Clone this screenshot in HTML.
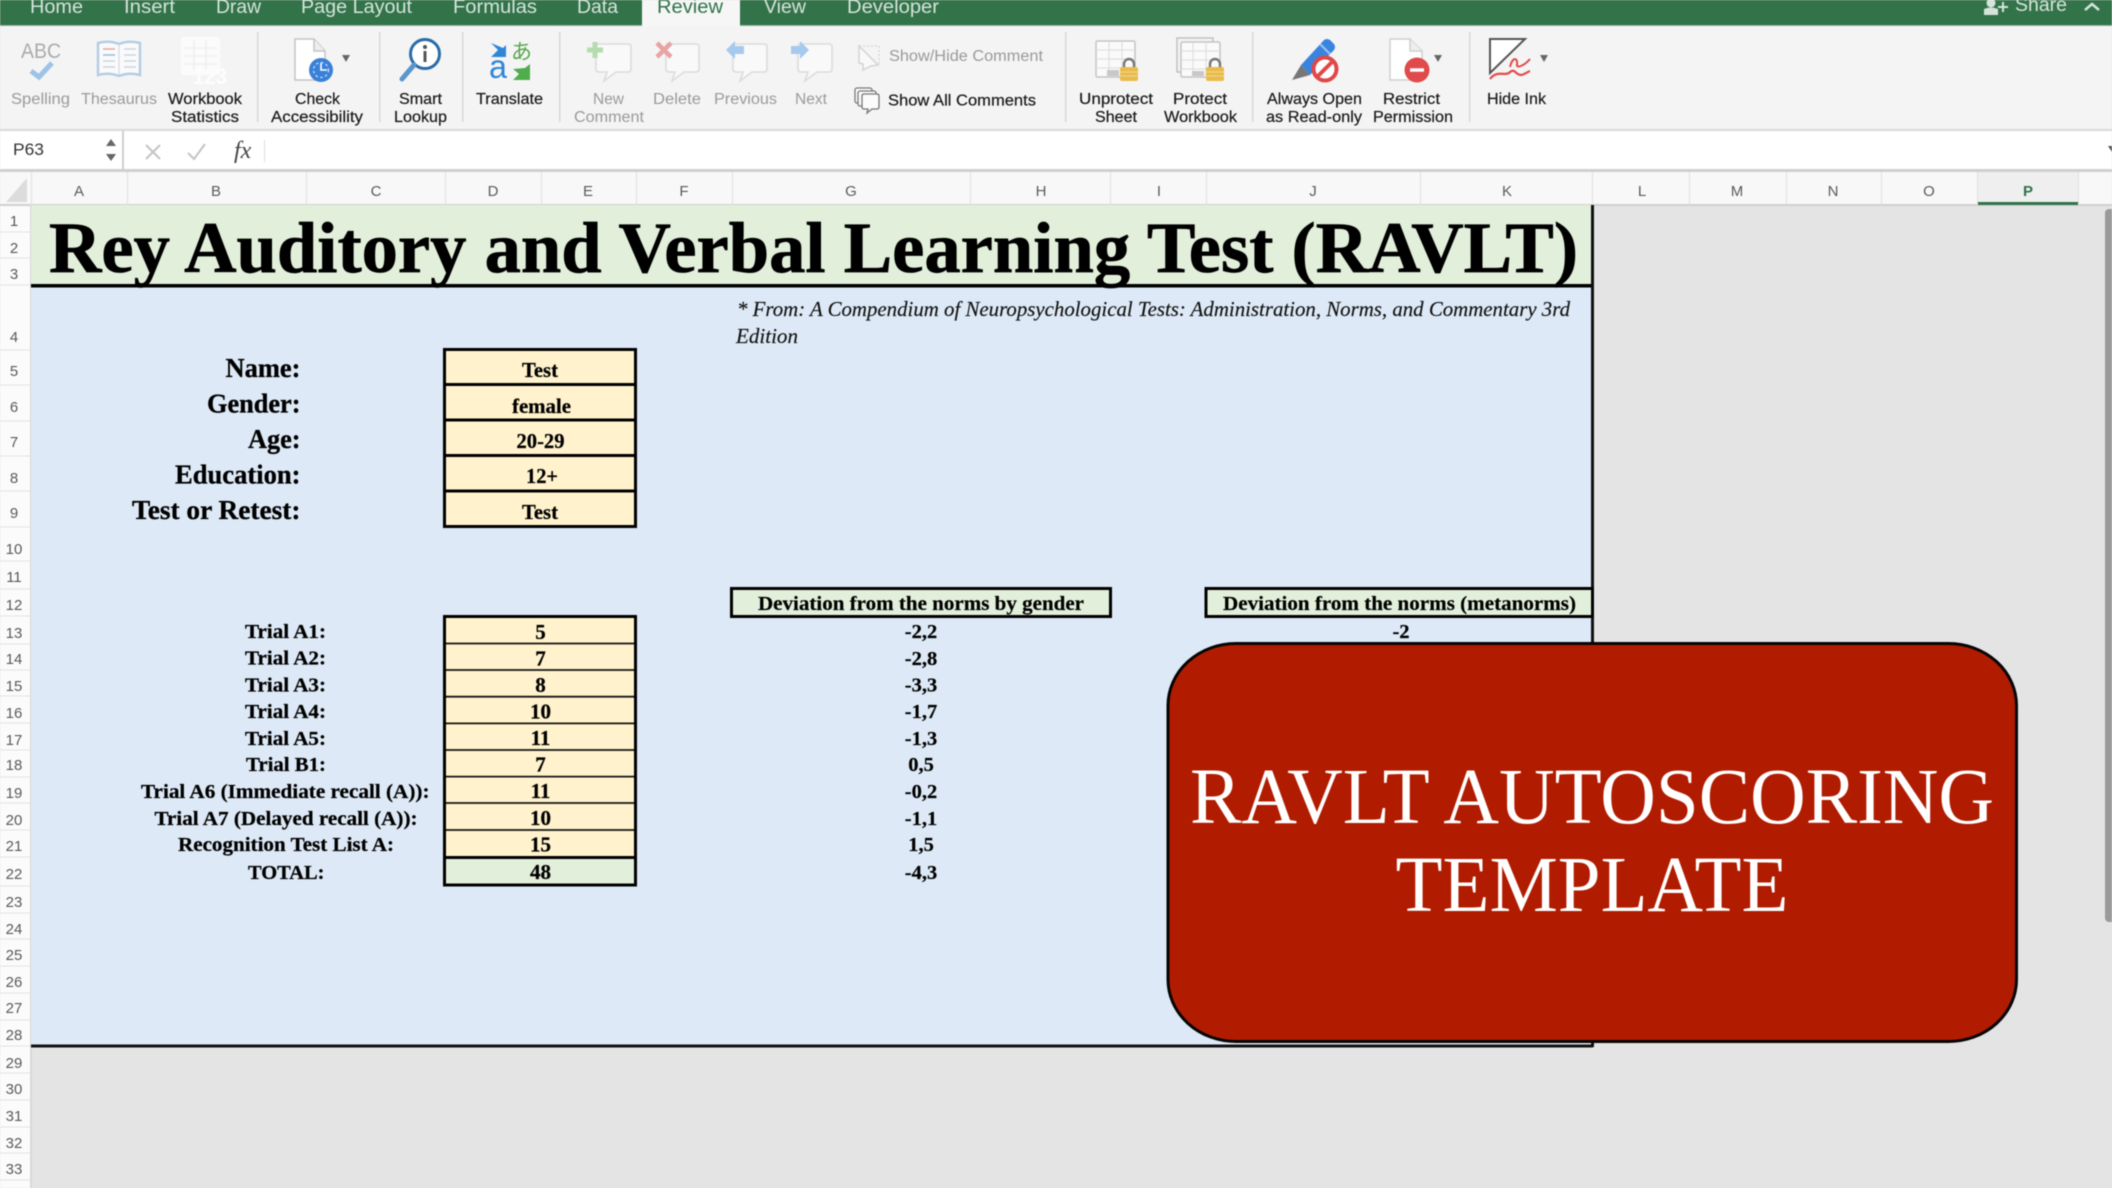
<!DOCTYPE html>
<html><head><meta charset="utf-8"><title>RAVLT Autoscoring Template</title>
<style>
html,body{margin:0;padding:0;background:#e5e4e5;width:2112px;height:1188px;overflow:hidden}
svg{display:block;filter:blur(.45px)}
.r{font-family:"Liberation Sans",sans-serif;font-size:15.5px;fill:#1a1a1a;stroke:#1a1a1a;stroke-width:.2px}
.d{font-family:"Liberation Sans",sans-serif;font-size:15.5px;fill:#9a9a9a}
.t{font-family:"Liberation Sans",sans-serif;font-size:19px;fill:#d5e4da}
.h{font-family:"Liberation Sans",sans-serif;font-size:15px;fill:#5a5a5a;text-anchor:middle}
.b{font-family:"Liberation Serif",serif;font-weight:bold;fill:#000}
</style></head><body>
<svg width="2112" height="1188" viewBox="0 0 2112 1188" xmlns="http://www.w3.org/2000/svg">
<rect width="2112" height="1188" fill="#e5e4e5"/>
<!-- title bar -->
<rect width="2112" height="25" fill="#33734a"/>
<rect y="25" width="2112" height="104" fill="#f4f4f4"/>
<rect x="642" width="98" height="26" fill="#f6f6f6"/>
<rect y="25" width="642" height="1" fill="#8fb39b"/><rect x="740" y="25" width="1372" height="1" fill="#8fb39b"/>
<text class="t" x="30" y="13" textLength="53" lengthAdjust="spacingAndGlyphs">Home</text>
<text class="t" x="124" y="13" textLength="51" lengthAdjust="spacingAndGlyphs">Insert</text>
<text class="t" x="216" y="13" textLength="45" lengthAdjust="spacingAndGlyphs">Draw</text>
<text class="t" x="301" y="13" textLength="111" lengthAdjust="spacingAndGlyphs">Page Layout</text>
<text class="t" x="453" y="13" textLength="84" lengthAdjust="spacingAndGlyphs">Formulas</text>
<text class="t" x="577" y="13" textLength="41" lengthAdjust="spacingAndGlyphs">Data</text>
<text class="t" x="657" y="13" textLength="66" lengthAdjust="spacingAndGlyphs" style="fill:#2f7349">Review</text>
<text class="t" x="764" y="13" textLength="42" lengthAdjust="spacingAndGlyphs">View</text>
<text class="t" x="847" y="13" textLength="92" lengthAdjust="spacingAndGlyphs">Developer</text>
<text class="t" x="2015" y="11" textLength="52" lengthAdjust="spacingAndGlyphs">Share</text>
<circle cx="1991" cy="3" r="4.5" fill="#d5e4da"/><path d="M1984 15v-6q7-3 14 0v6z" fill="#d5e4da"/>
<path d="M1998 7h10M2003 2v10" stroke="#d5e4da" stroke-width="2"/>
<path d="M2085 10l7-6 7 6" fill="none" stroke="#d5e4da" stroke-width="2.5"/>

<!-- ribbon separators -->
<g fill="#d8d8d8"><rect x="257" y="32" width="1.5" height="90"/><rect x="379" y="32" width="1.5" height="90"/><rect x="462" y="32" width="1.5" height="90"/><rect x="559" y="32" width="1.5" height="90"/><rect x="1065" y="32" width="1.5" height="90"/><rect x="1252" y="32" width="1.5" height="90"/><rect x="1469" y="32" width="1.5" height="90"/></g>

<!-- ribbon labels -->
<text class="d" x="11" y="104" textLength="59" lengthAdjust="spacingAndGlyphs">Spelling</text>
<text class="d" x="81" y="104" textLength="76" lengthAdjust="spacingAndGlyphs">Thesaurus</text>
<text class="r" x="168" y="104" textLength="74" lengthAdjust="spacingAndGlyphs">Workbook</text>
<text class="r" x="171" y="122" textLength="68" lengthAdjust="spacingAndGlyphs">Statistics</text>
<text class="r" x="295" y="104" textLength="45" lengthAdjust="spacingAndGlyphs">Check</text>
<text class="r" x="271" y="122" textLength="92" lengthAdjust="spacingAndGlyphs">Accessibility</text>
<text class="r" x="399" y="104" textLength="43" lengthAdjust="spacingAndGlyphs">Smart</text>
<text class="r" x="394" y="122" textLength="53" lengthAdjust="spacingAndGlyphs">Lookup</text>
<text class="r" x="476" y="104" textLength="67" lengthAdjust="spacingAndGlyphs">Translate</text>
<text class="d" x="593" y="104" textLength="31" lengthAdjust="spacingAndGlyphs">New</text>
<text class="d" x="574" y="122" textLength="70" lengthAdjust="spacingAndGlyphs">Comment</text>
<text class="d" x="653" y="104" textLength="48" lengthAdjust="spacingAndGlyphs">Delete</text>
<text class="d" x="714" y="104" textLength="63" lengthAdjust="spacingAndGlyphs">Previous</text>
<text class="d" x="795" y="104" textLength="32" lengthAdjust="spacingAndGlyphs">Next</text>
<text class="d" x="889" y="61" textLength="154" lengthAdjust="spacingAndGlyphs">Show/Hide Comment</text>
<text class="r" x="888" y="105.5" textLength="148" lengthAdjust="spacingAndGlyphs">Show All Comments</text>
<text class="r" x="1079" y="104" textLength="74" lengthAdjust="spacingAndGlyphs">Unprotect</text>
<text class="r" x="1095" y="122" textLength="42" lengthAdjust="spacingAndGlyphs">Sheet</text>
<text class="r" x="1173" y="104" textLength="54" lengthAdjust="spacingAndGlyphs">Protect</text>
<text class="r" x="1164" y="122" textLength="73" lengthAdjust="spacingAndGlyphs">Workbook</text>
<text class="r" x="1267" y="104" textLength="95" lengthAdjust="spacingAndGlyphs">Always Open</text>
<text class="r" x="1266" y="122" textLength="96" lengthAdjust="spacingAndGlyphs">as Read-only</text>
<text class="r" x="1383" y="104" textLength="57" lengthAdjust="spacingAndGlyphs">Restrict</text>
<text class="r" x="1373" y="122" textLength="80" lengthAdjust="spacingAndGlyphs">Permission</text>
<text class="r" x="1487" y="104" textLength="59" lengthAdjust="spacingAndGlyphs">Hide Ink</text>

<!-- icons: spelling -->
<text x="21" y="58" font-family="Liberation Sans,sans-serif" font-size="21" fill="#ababab" textLength="40" lengthAdjust="spacingAndGlyphs">ABC</text>
<path d="M31 71l8 6 13-14" fill="none" stroke="#9dc3e6" stroke-width="5"/>
<!-- thesaurus -->
<path d="M98 43q11-3 21 1 10-4 21-1v32q-11-3-21 1-10-4-21-1z" fill="#fafafa" stroke="#b4cde4" stroke-width="2.5"/>
<path d="M119 44v31" stroke="#c8d8e8"/>
<path d="M103 49h12M103 55h12M103 61h12M103 67h12M124 49h12M124 55h12M124 61h12M124 67h12" stroke="#cdd5e0" stroke-width="1.5"/>
<path d="M103 49h12" stroke="#e8b0a8" stroke-width="1.5"/><path d="M103 55h12" stroke="#9dc3e6" stroke-width="1.5"/>
<!-- stats -->
<rect x="181" y="37" width="39" height="38" rx="3" fill="#fbfbfb"/>
<path d="M184 48h33M184 56h33M184 64h33M194 40v30M206 40v30" stroke="#efefef" stroke-width="1.5"/>
<text x="193" y="84" font-family="Liberation Sans,sans-serif" font-size="22" font-weight="bold" fill="#fdfdfd" textLength="34" lengthAdjust="spacingAndGlyphs">123</text>
<!-- check accessibility -->
<path d="M295 39h19l11 12v29h-30z" fill="#fff" stroke="#c4c4c4" stroke-width="1.5"/><path d="M314 39v12h11" fill="#eee" stroke="#c4c4c4" stroke-width="1.5"/>
<circle cx="321" cy="70" r="12" fill="#3a80d8"/><path d="M321 63v7h6" fill="none" stroke="#fff" stroke-width="1.6"/><circle cx="321" cy="70" r="7.5" fill="none" stroke="#cfe2f8" stroke-dasharray="2.5 2.5" stroke-width="1.2"/>
<path d="M342 55h8l-4 7z" fill="#666"/>
<!-- smart lookup -->
<circle cx="425" cy="54" r="14.5" fill="#fff" stroke="#2a6ca8" stroke-width="3"/>
<path d="M414 65l-12 14" stroke="#5a96cc" stroke-width="5" stroke-linecap="round"/>
<circle cx="425" cy="47" r="2" fill="#555"/><path d="M425 51v11" stroke="#555" stroke-width="3"/>
<!-- translate -->
<path d="M491 43l12 5 3-3v12h-15l7-7z" fill="#2f86d9"/>
<text x="511" y="59" font-family="Noto Sans CJK JP,sans-serif" font-size="21" fill="#55a64c">あ</text>
<text x="489" y="78" font-family="Liberation Sans,sans-serif" font-size="33" fill="#2f86d9" textLength="18" lengthAdjust="spacingAndGlyphs">a</text>
<path d="M530 64v16h-17l6-6-6-5 12-1z" fill="#50ad4c"/>
<!-- comment bubbles -->
<g fill="#f9f9f9" stroke="#dcdcdc" stroke-width="1.6">
<path d="M596 44h32q3 0 3 3v22q0 3-3 3h-12l-12 9 3-9h-8q-3 0-3-3v-22q0-3 3-3z"/>
<path d="M666 44h30q3 0 3 3v22q0 3-3 3h-12l-12 9 3-9h-6q-3 0-3-3v-22q0-3 3-3z"/>
<path d="M733 44h31q3 0 3 3v22q0 3-3 3h-12l-12 9 3-9h-7q-3 0-3-3v-22q0-3 3-3z"/>
<path d="M798 44h31q3 0 3 3v22q0 3-3 3h-12l-12 9 3-9h-7q-3 0-3-3v-22q0-3 3-3z"/>
</g>
<path d="M587 50h16M595 42v16" stroke="#b5dcae" stroke-width="5"/>
<path d="M657 43l14 14M671 43l-14 14" stroke="#e8a3a3" stroke-width="4.5"/>
<path d="M726 50l9-9v5h9v8h-9v5z" fill="#a6c9ee"/>
<path d="M809 50l-9-9v5h-9v8h9v5z" fill="#a6c9ee"/>
<!--- show/hide -->
<path d="M859 46l19 19-7 1-8 4v-6l-4-1z" fill="#f9f9f9" stroke="#d4d4d4" stroke-width="1.5"/>
<path d="M859 46h20v18" fill="none" stroke="#d4d4d4" stroke-width="1.2" stroke-dasharray="2 2"/>
<g fill="#fbfbfb" stroke="#777" stroke-width="1.3">
<rect x="855" y="88" width="17" height="15" rx="2"/><rect x="858" y="91" width="18" height="15" rx="2"/>
<path d="M864 94h13q2 0 2 2v11q0 2-2 2h-5l-5 4 1-4h-4q-2 0-2-2v-11q0-2 2-2z"/>
</g>
<!-- unprotect -->
<rect x="1096" y="41" width="39" height="36" rx="1.5" fill="#fafafa" stroke="#c4c4c4" stroke-width="1.5"/>
<path d="M1096 50h39M1096 59h39M1096 68h39M1109 41v36M1122 41v36" stroke="#dcdcdc"/>
<rect x="1107" y="70" width="12" height="6" fill="#c8c8c8"/>
<path d="M1124 68v-4a5 5 0 0 1 10 0v4" fill="none" stroke="#777" stroke-width="2.4"/>
<rect x="1120" y="67" width="18" height="14" rx="2" fill="#e8bb4c"/><path d="M1120 72h18M1120 76h18" stroke="#f2d88a"/>
<!-- protect -->
<rect x="1177" y="38" width="36" height="34" fill="#f3f3f3" stroke="#bbb" stroke-width="1.3"/>
<rect x="1181" y="42" width="39" height="35" rx="1.5" fill="#fafafa" stroke="#c4c4c4" stroke-width="1.5"/>
<path d="M1181 51h39M1181 60h39M1181 69h39M1193 42v35M1206 42v35" stroke="#dcdcdc"/>
<rect x="1192" y="71" width="12" height="5" fill="#c8c8c8"/>
<path d="M1210 68v-4a5 5 0 0 1 10 0v4" fill="none" stroke="#777" stroke-width="2.4"/>
<rect x="1206" y="67" width="18" height="14" rx="2" fill="#e8bb4c"/><path d="M1206 72h18M1206 76h18" stroke="#f2d88a"/>
<!-- read only -->
<path d="M1301 65L1324 40q3-2 6 0l4 4q2 3 0 6L1310 75z" fill="#3a84e0"/>
<path d="M1320 44l10 10" stroke="#9cc4f0" stroke-width="2"/>
<path d="M1301 65l9 10-18 5z" fill="#777"/>
<circle cx="1325" cy="69" r="11.5" fill="#fff" stroke="#e04848" stroke-width="4"/><path d="M1318 76l14-14" stroke="#e04848" stroke-width="4"/>
<!-- restrict -->
<path d="M1390 39h20l12 12v29h-32z" fill="#fff" stroke="#cfcfcf" stroke-width="1.5"/><path d="M1410 39v12h12" fill="#eee" stroke="#cfcfcf" stroke-width="1.5"/>
<circle cx="1417" cy="70" r="12.5" fill="#e04a4a"/><path d="M1410 70h14" stroke="#fff" stroke-width="3.5"/>
<path d="M1434 55h8l-4 7z" fill="#666"/>
<!-- hide ink -->
<path d="M1490 73V39h35z" fill="#fff" stroke="#555" stroke-width="2"/>
<path d="M1510 67c3-12 8-8 7-3s7 2 13-5" fill="none" stroke="#e24a4a" stroke-width="2"/>
<path d="M1490 79c7-9 14-3 19-6 6-6 6 2 12 2 3 0 6-3 9-4" fill="none" stroke="#e24a4a" stroke-width="2.2"/>
<path d="M1540 55h8l-4 7z" fill="#666"/>

<!-- formula bar -->
<rect y="129" width="2112" height="2" fill="#d9d9d9"/>
<rect y="131" width="2112" height="39" fill="#fff"/>
<rect y="169" width="2112" height="3" fill="#cfcfcf"/>
<rect x="122" y="131" width="2" height="39" fill="#cfcfcf"/>
<text x="13" y="155" font-family="Liberation Sans,sans-serif" font-size="17" fill="#333" textLength="31" lengthAdjust="spacingAndGlyphs">P63</text>
<path d="M106 146l5-7 5 7zM106 154l5 7 5-7z" fill="#666"/>
<path d="M146 145l14 14M160 145l-14 14" stroke="#c4c4c4" stroke-width="2"/>
<path d="M188 153l6 6 11-15" fill="none" stroke="#c4c4c4" stroke-width="2"/>
<text x="234" y="158" font-family="Liberation Serif,serif" font-style="italic" font-size="24" fill="#444">fx</text>
<rect x="264" y="140" width="1" height="22" fill="#ddd"/>
<path d="M2108 146l4 6v-6z" fill="#555"/>

<!-- column header -->
<rect y="172" width="2112" height="33" fill="#f8f8f8"/>
<rect y="204" width="2112" height="2" fill="#d0d0d0"/>
<rect x="1977" y="172" width="101" height="33" fill="#efefef"/>
<rect x="1977" y="202" width="101" height="3" fill="#2f7349"/>
<path d="M6 202L27 178v24z" fill="#dcdcdc"/>
<g fill="#e0e0e0"><rect x="31" y="172" width="1" height="33"/><rect x="127" y="172" width="1" height="33"/><rect x="306" y="172" width="1" height="33"/><rect x="445" y="172" width="1" height="33"/><rect x="541" y="172" width="1" height="33"/><rect x="636" y="172" width="1" height="33"/><rect x="732" y="172" width="1" height="33"/><rect x="970" y="172" width="1" height="33"/><rect x="1110" y="172" width="1" height="33"/><rect x="1206" y="172" width="1" height="33"/><rect x="1420" y="172" width="1" height="33"/><rect x="1592" y="172" width="1" height="33"/><rect x="1689" y="172" width="1" height="33"/><rect x="1786" y="172" width="1" height="33"/><rect x="1881" y="172" width="1" height="33"/><rect x="1977" y="172" width="1" height="33"/><rect x="2078" y="172" width="1" height="33"/></g>
<text class="h" x="79" y="196">A</text><text class="h" x="216" y="196">B</text><text class="h" x="376" y="196">C</text><text class="h" x="493" y="196">D</text><text class="h" x="588" y="196">E</text><text class="h" x="684" y="196">F</text><text class="h" x="851" y="196">G</text><text class="h" x="1041" y="196">H</text><text class="h" x="1159" y="196">I</text><text class="h" x="1313" y="196">J</text><text class="h" x="1507" y="196">K</text><text class="h" x="1642" y="196">L</text><text class="h" x="1737" y="196">M</text><text class="h" x="1833" y="196">N</text><text class="h" x="1929" y="196">O</text><text class="h" x="2028" y="196" style="fill:#2f7349;font-weight:bold">P</text>

<!-- row header -->
<rect y="206" width="31" height="982" fill="#fbfbfb"/>
<rect x="30" y="205" width="2" height="983" fill="#d8d8d8"/>
<path d="M0 232h30M0 258h30M0 285h30M0 350h30M0 385h30M0 421h30M0 456h30M0 491h30M0 527h30M0 561h30M0 589h30M0 616h30M0 644h30M0 670h30M0 696h30M0 723h30M0 750h30M0 777h30M0 803h30M0 830h30M0 857h30M0 886h30M0 913h30M0 939h30M0 966h30M0 993h30M0 1020h30M0 1046h30M0 1073h30M0 1100h30M0 1127h30M0 1153h30M0 1180h30" stroke="#e4e4e4" stroke-width="1"/>
<text class="h" x="14" y="226">1</text><text class="h" x="14" y="253">2</text><text class="h" x="14" y="279">3</text><text class="h" x="14" y="342">4</text><text class="h" x="14" y="376">5</text><text class="h" x="14" y="412">6</text><text class="h" x="14" y="447">7</text><text class="h" x="14" y="483">8</text><text class="h" x="14" y="518">9</text><text class="h" x="14" y="554">10</text><text class="h" x="14" y="582">11</text><text class="h" x="14" y="610">12</text><text class="h" x="14" y="638">13</text><text class="h" x="14" y="664">14</text><text class="h" x="14" y="691">15</text><text class="h" x="14" y="718">16</text><text class="h" x="14" y="745">17</text><text class="h" x="14" y="770">18</text><text class="h" x="14" y="798">19</text><text class="h" x="14" y="825">20</text><text class="h" x="14" y="851">21</text><text class="h" x="14" y="879">22</text><text class="h" x="14" y="907">23</text><text class="h" x="14" y="934">24</text><text class="h" x="14" y="960">25</text><text class="h" x="14" y="987">26</text><text class="h" x="14" y="1013">27</text><text class="h" x="14" y="1040">28</text><text class="h" x="14" y="1068">29</text><text class="h" x="14" y="1094">30</text><text class="h" x="14" y="1121">31</text><text class="h" x="14" y="1148">32</text><text class="h" x="14" y="1174">33</text>

<!-- sheet -->
<rect x="31" y="205" width="1561" height="80" fill="#e2efda"/>
<rect x="31" y="285" width="1561" height="760" fill="#dde9f6"/>
<rect x="31" y="284" width="1562" height="3.5" fill="#000"/>
<rect x="31" y="1044.5" width="1562" height="3" fill="#111"/>
<rect x="1591" y="205" width="3" height="842" fill="#111"/>
<text class="b" x="49" y="272" font-size="72" stroke="#000" stroke-width=".7" textLength="1529" lengthAdjust="spacingAndGlyphs">Rey Auditory and Verbal Learning Test (RAVLT)</text>
<g font-family="Liberation Serif,serif" font-style="italic" font-size="21.5" fill="#111" stroke="#111" stroke-width=".15">
<text x="737" y="316" textLength="833" lengthAdjust="spacingAndGlyphs">* From: A Compendium of Neuropsychological Tests: Administration, Norms, and Commentary 3rd</text>
<text x="736" y="343" textLength="62" lengthAdjust="spacingAndGlyphs">Edition</text>
</g>

<!-- top labels -->
<g font-size="27" font-family="Liberation Serif,serif" font-weight="bold" fill="#000" stroke="#000" stroke-width=".3">
<text x="225.5" y="377" textLength="75" lengthAdjust="spacingAndGlyphs">Name:</text>
<text x="207" y="412.5" textLength="93.5" lengthAdjust="spacingAndGlyphs">Gender:</text>
<text x="248" y="448" textLength="52.5" lengthAdjust="spacingAndGlyphs">Age:</text>
<text x="175" y="483.5" textLength="125.5" lengthAdjust="spacingAndGlyphs">Education:</text>
<text x="132" y="519" textLength="168.5" lengthAdjust="spacingAndGlyphs">Test or Retest:</text>
</g>
<!-- top box -->
<rect x="444.5" y="349.5" width="191" height="177" fill="#fff2cc" stroke="#000" stroke-width="3"/>
<path d="M444 384.5h192M444 420h192M444 455.5h192M444 491h192" stroke="#000" stroke-width="3"/>
<g font-family="Liberation Serif,serif" font-weight="bold" font-size="21" fill="#000" stroke="#000" stroke-width=".25">
<text x="522" y="377" textLength="36" lengthAdjust="spacingAndGlyphs">Test</text>
<text x="512" y="413" textLength="59" lengthAdjust="spacingAndGlyphs">female</text>
<text x="516.5" y="448" textLength="48" lengthAdjust="spacingAndGlyphs">20-29</text>
<text x="526" y="483" textLength="32" lengthAdjust="spacingAndGlyphs">12+</text>
<text x="522" y="519" textLength="36" lengthAdjust="spacingAndGlyphs">Test</text>
</g>

<!-- trial labels -->
<g font-family="Liberation Serif,serif" font-weight="bold" font-size="20.5" fill="#000" stroke="#000" stroke-width=".25">
<text x="245" y="638" textLength="81" lengthAdjust="spacingAndGlyphs">Trial A1:</text>
<text x="245" y="664.5" textLength="81" lengthAdjust="spacingAndGlyphs">Trial A2:</text>
<text x="245" y="691.5" textLength="81" lengthAdjust="spacingAndGlyphs">Trial A3:</text>
<text x="245" y="718" textLength="81" lengthAdjust="spacingAndGlyphs">Trial A4:</text>
<text x="245" y="745" textLength="81" lengthAdjust="spacingAndGlyphs">Trial A5:</text>
<text x="246" y="771" textLength="80" lengthAdjust="spacingAndGlyphs">Trial B1:</text>
<text x="141" y="798" textLength="288.5" lengthAdjust="spacingAndGlyphs">Trial A6 (Immediate recall (A)):</text>
<text x="154.5" y="825" textLength="263" lengthAdjust="spacingAndGlyphs">Trial A7 (Delayed recall (A)):</text>
<text x="178" y="851" textLength="216" lengthAdjust="spacingAndGlyphs">Recognition Test List A:</text>
<text x="248" y="879" textLength="76.5" lengthAdjust="spacingAndGlyphs">TOTAL:</text>
</g>
<!-- lower box -->
<rect x="444.5" y="616.5" width="191" height="241" fill="#fff2cc"/>
<rect x="444.5" y="857" width="191" height="28" fill="#e2efda"/>
<path d="M444 643.5h192M444 670h192M444 696.7h192M444 723.4h192M444 750h192M444 776.6h192M444 803h192M444 830h192" stroke="#151515" stroke-width="1.8"/>
<path d="M444 857.5h192" stroke="#000" stroke-width="3"/>
<rect x="444.5" y="616.5" width="191" height="268.5" fill="none" stroke="#000" stroke-width="3"/>
<g font-family="Liberation Serif,serif" font-weight="bold" font-size="21" fill="#000" stroke="#000" stroke-width=".25" text-anchor="middle">
<text x="540.5" y="639">5</text><text x="540.5" y="665.5">7</text><text x="540.5" y="692">8</text><text x="540.5" y="718.5">10</text><text x="540.5" y="745">11</text><text x="540.5" y="771.5">7</text><text x="540.5" y="798">11</text><text x="540.5" y="825">10</text><text x="540.5" y="851.5">15</text><text x="540.5" y="879">48</text>
</g>

<!-- deviation -->
<rect x="731.5" y="588.5" width="379" height="28" fill="#e2efda" stroke="#000" stroke-width="3"/>
<rect x="1206" y="588.5" width="386.5" height="28" fill="#e2efda" stroke="#000" stroke-width="3"/>
<g font-family="Liberation Serif,serif" font-weight="bold" font-size="20.5" fill="#000" stroke="#000" stroke-width=".2">
<text x="758" y="610" textLength="326" lengthAdjust="spacingAndGlyphs">Deviation from the norms by gender</text>
<text x="1223" y="610" textLength="353" lengthAdjust="spacingAndGlyphs">Deviation from the norms (metanorms)</text>
</g>
<g font-family="Liberation Serif,serif" font-weight="bold" font-size="20.5" fill="#000" stroke="#000" stroke-width=".2" text-anchor="middle">
<text x="921" y="638">-2,2</text><text x="921" y="665">-2,8</text><text x="921" y="691.5">-3,3</text><text x="921" y="718">-1,7</text><text x="921" y="745">-1,3</text><text x="921" y="771">0,5</text><text x="921" y="798">-0,2</text><text x="921" y="825">-1,1</text><text x="921" y="851">1,5</text><text x="921" y="879">-4,3</text>
<text x="1401" y="638">-2</text>
</g>

<!-- scrollbar -->
<rect x="2105" y="209" width="10" height="713" rx="4" fill="#9a9a9a"/>

<!-- red banner -->
<rect x="1168" y="643.5" width="848.5" height="398" rx="68" ry="62" fill="#b11c00" stroke="#050505" stroke-width="3"/>
<g font-family="Liberation Serif,serif" font-size="79" fill="#fff">
<text x="1190" y="823" textLength="804" lengthAdjust="spacingAndGlyphs">RAVLT AUTOSCORING</text>
<text x="1395.5" y="911" textLength="393" lengthAdjust="spacingAndGlyphs">TEMPLATE</text>
</g>
</svg>
</body></html>
